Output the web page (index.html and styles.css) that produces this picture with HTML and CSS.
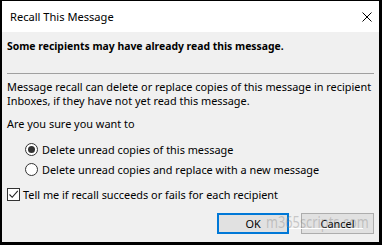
FILE: index.html
```html
<!DOCTYPE html>
<html>
<head>
<meta charset="utf-8">
<link rel="stylesheet" href="styles.css">
</head>
<body>
<div class="window">
  <div class="titlebar">
    <span class="title">Recall This Message</span>
    <svg class="close" width="10" height="10" viewBox="0 0 10 10"><path d="M0.5 0.5L9.5 9.5M9.5 0.5L0.5 9.5" stroke="#000" stroke-width="1"/></svg>
  </div>
  <div class="content">
    <div class="heading">Some recipients may have already read this message.</div>
    <div class="sep"></div>
    <p class="desc">Message recall can delete or replace copies of this message in recipient<br>Inboxes, if they have not yet read this message.</p>
    <p class="ask">Are you sure you want to</p>
    <div class="options">
      <div class="radio"><span class="dot on"></span><span>Delete unread copies of this message</span></div>
      <div class="radio"><span class="dot"></span><span>Delete unread copies and replace with a new message</span></div>
    </div>
    <div class="check"><span class="box"><svg width="11" height="11" viewBox="0 0 11 11"><path d="M1.5 5.5L4.2 8.3L9.8 1.8" fill="none" stroke="#222" stroke-width="1.1"/></svg></span><span>Tell me if recall succeeds or fails for each recipient</span></div>
    <div class="buttons">
      <div class="btn default">OK</div>
      <div class="btn">Cancel</div>
    </div>
  </div>
  <div class="watermark">m365scripts.com</div>
  <div class="wm-line"></div>
</div>
</body>
</html>
```
FILE: styles.css
```css
html, body {
  margin: 0;
  padding: 0;
}
body {
  background: #000;
  width: 382px;
  height: 245px;
  overflow: hidden;
  font-family: "Noto Sans", "Open Sans", sans-serif;
  font-size: 10.9px;
  color: #000;
  white-space: nowrap;
}
.window {
  position: relative;
  overflow: hidden;
  margin: 1px 0 0 2px;
  width: 377px;
  height: 241px;
  background: #f0f0f0;
  display: flex;
  flex-direction: column;
}
.titlebar {
  height: 31px;
  flex: none;
  background: #fff;
  display: flex;
  align-items: center;
  justify-content: space-between;
  padding: 0 7px 0 8px;
}
.title {
  font-size: 11.1px;
}
.close {
  display: block;
}
.content {
  padding: 0 5px;
  display: flex;
  flex-direction: column;
}
.heading {
  font-weight: bold;
  font-size: 10.4px;
  line-height: 16px;
  margin-top: 6px;
}
.sep {
  margin-top: 19px;
  height: 1px;
  background: #a0a0a0;
}
.desc {
  margin: 6px 0 0;
  line-height: 14px;
}
.ask {
  margin: 9px 0 0;
  line-height: 14px;
}
.options {
  margin-top: 8px;
  display: flex;
  flex-direction: column;
}
.radio {
  height: 20px;
  display: flex;
  align-items: center;
  padding-left: 18px;
}
.dot {
  width: 11px;
  height: 11px;
  border: 1px solid #333;
  border-radius: 50%;
  background: #fff;
  margin-right: 4px;
  display: flex;
  align-items: center;
  justify-content: center;
}
.dot.on::after {
  content: "";
  width: 7px;
  height: 7px;
  border-radius: 50%;
  background: #333;
}
.check {
  margin-top: 5px;
  height: 20px;
  display: flex;
  align-items: center;
}
.box {
  width: 11px;
  height: 11px;
  border: 1px solid #333;
  background: #fff;
  margin-right: 3px;
  display: flex;
  align-items: center;
  justify-content: center;
}
.box svg {
  display: block;
}
.buttons {
  margin-top: 9px;
  display: flex;
  justify-content: flex-end;
  gap: 12px;
}
.btn {
  width: 71px;
  height: 19px;
  border: 1px solid #adadad;
  background: #e1e1e1;
  display: flex;
  align-items: center;
  justify-content: center;
}
.btn.default {
  width: 68px;
  height: 17px;
  border: 2px solid #0078d7;
}
.watermark {
  position: absolute;
  left: 264px;
  top: 211px;
  font-size: 16px;
  line-height: 20px;
  color: rgba(140, 140, 140, 0.42);
  transform: scaleX(0.8);
  transform-origin: left center;
  pointer-events: none;
}
.wm-line {
  position: absolute;
  left: 287px;
  top: 227px;
  width: 74px;
  height: 1px;
  background: #fff;
}
```
